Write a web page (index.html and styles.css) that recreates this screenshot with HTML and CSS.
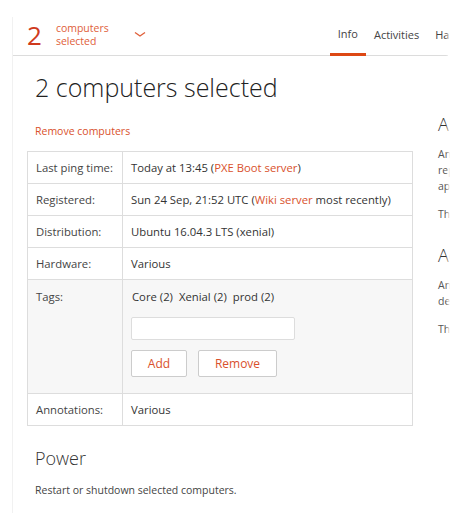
FILE: index.html
```html
<!DOCTYPE html>
<html lang="en">
<head>
    <meta charset="UTF-8">
    <meta name="viewport" content="width=device-width, initial-scale=1.0">
    <title>Selected computers</title>
    <link rel="stylesheet" href="styles.css">
</head>
<body>
    <div class="frame">
        <!-- selection header with tabs -->
        <div class="header">
            <div class="selection">
                <span class="count">2</span>
                <span class="count-label">computers<br>selected</span>
                <svg class="chevron" width="12" height="7" viewBox="0 0 12 7">
                    <path d="M1 1.5 L6 5 L11 1.5" fill="none" stroke="#e0603a" stroke-width="1.4"/>
                </svg>
            </div>
            <div class="tabs">
                <span class="tab active">Info</span>
                <span class="tab">Activities</span>
                <span class="tab">Hardware</span>
            </div>
        </div>

        <div class="content">
            <div class="main">
                <h1 class="title">2 computers selected</h1>
                <a class="link remove-link" href="#">Remove computers</a>

                <table class="info-table">
                    <tr>
                        <td class="label">Last ping time:</td>
                        <td>Today at 13:45 (<a class="link" href="#">PXE Boot server</a>)</td>
                    </tr>
                    <tr>
                        <td class="label">Registered:</td>
                        <td>Sun 24 Sep, 21:52 UTC (<a class="link" href="#">Wiki server</a> most recently)</td>
                    </tr>
                    <tr>
                        <td class="label">Distribution:</td>
                        <td>Ubuntu 16.04.3 LTS (xenial)</td>
                    </tr>
                    <tr>
                        <td class="label">Hardware:</td>
                        <td>Various</td>
                    </tr>
                    <tr class="tags-row">
                        <td class="label">Tags:</td>
                        <td>
                            <div class="tag-list">
                                <span>Core (2)</span>
                                <span>Xenial (2)</span>
                                <span>prod (2)</span>
                            </div>
                            <input class="tag-input" type="text">
                            <div class="tag-buttons">
                                <button class="btn btn-add">Add</button>
                                <button class="btn btn-remove">Remove</button>
                            </div>
                        </td>
                    </tr>
                    <tr>
                        <td class="label">Annotations:</td>
                        <td>Various</td>
                    </tr>
                </table>

                <h2 class="section-title">Power</h2>
                <p class="section-text">Restart or shutdown selected computers.</p>
            </div>

            <div class="side">
                <h3 class="side-title">Alerts</h3>
                <p class="side-text">Any alerts raised on<br>repositories or<br>applications.</p>
                <p class="side-text">There are none.</p>
                <h3 class="side-title">Activities</h3>
                <p class="side-text">Any activities<br>delivered.</p>
                <p class="side-text">There are none.</p>
            </div>
        </div>
    </div>
</body>
</html>
```

FILE: styles.css
```css
* {
    margin: 0;
    padding: 0;
    box-sizing: border-box;
}
body {
    font-family: "Open Sans", "DejaVu Sans", sans-serif;
    color: #333;
    background: #fff;
}
.frame {
    position: relative;
    margin: 17px 0 0 12px;
    width: 438px;
    height: 496px;
    overflow: hidden;
    border-left: 1px solid #f1f1f1;
}
/* soft fade where the panel is cut off */
.frame::after {
    content: "";
    position: absolute;
    top: 0;
    right: 0;
    width: 4px;
    height: 100%;
    background: linear-gradient(to right, rgba(255,255,255,0), #fff);
}

/* header */
.header {
    display: flex;
    align-items: stretch;
    height: 39px;
    border-bottom: 1px solid #dcdcdc;
    margin-right: 2px;
}
.selection {
    display: flex;
    align-items: center;
    padding-left: 14px;
    padding-bottom: 3px;
}
.count {
    font-size: 26px;
    color: #cf3a1d;
    line-height: 1;
    margin-right: 14px;
}
.count-label {
    font-size: 10.5px;
    line-height: 13px;
    color: #e0603a;
    margin-right: 25px;
}
.chevron {
    display: block;
}
.tabs {
    display: flex;
    align-items: stretch;
    margin-left: auto;
    margin-right: -46px;
    flex-shrink: 0;
}
.tab {
    display: flex;
    align-items: center;
    padding: 0 8px 4px;
    font-size: 11px;
    color: #444;
}
.tab.active {
    border-bottom: 3px solid #dd4814;
    margin-bottom: -1px;
}

/* body */
.content {
    display: flex;
}
.main {
    width: 400px;
    padding-left: 14px;
    flex-shrink: 0;
}
.title {
    font-size: 25px;
    font-weight: 300;
    color: #222;
    margin: 15px 0 0 8px;
    line-height: 32px;
}
.link {
    color: #d9512c;
    text-decoration: none;
}
.remove-link {
    display: block;
    font-size: 10.5px;
    margin: 20px 0 0 8px;
    line-height: 16px;
}
.info-table {
    width: 386px;
    border-collapse: collapse;
    margin-top: 12px;
    font-size: 11.3px;
}
.info-table td {
    border: 1px solid #ddd;
    height: 32px;
    padding: 0 8px;
    vertical-align: middle;
    white-space: nowrap;
}
.info-table td.label {
    width: 95px;
    color: #444;
}
.tags-row td {
    background: #f7f7f7;
    vertical-align: top;
    padding-top: 9px;
    padding-bottom: 16px;
}
.tag-list {
    display: flex;
    gap: 6px;
    padding-left: 1px;
    line-height: 16px;
}
.tag-input {
    display: block;
    width: 164px;
    height: 23px;
    margin-top: 12px;
    border: 1px solid #ddd;
    border-radius: 2px;
    background: #fff;
}
.tag-buttons {
    display: flex;
    gap: 11px;
    margin-top: 10px;
}
.btn {
    height: 27px;
    background: #fff;
    border: 1px solid #ccc;
    border-radius: 2px;
    color: #d9512c;
    font-family: inherit;
    font-size: 12px;
}
.btn-add {
    width: 56px;
}
.btn-remove {
    width: 79px;
}
.section-title {
    font-size: 18px;
    font-weight: 300;
    color: #333;
    margin: 20px 0 0 8px;
    line-height: 24px;
}
.section-text {
    font-size: 10.5px;
    color: #444;
    margin: 13px 0 0 8px;
}

/* side column */
.side {
    padding-left: 25px;
    width: 160px;
    flex-shrink: 0;
    color: #555;
}
.side-title {
    font-size: 18px;
    font-weight: 300;
    color: #333;
    line-height: 24px;
}
.side-title:first-child {
    margin-top: 56px;
}
.side-text {
    font-size: 10.5px;
    line-height: 16px;
    margin-top: 12px;
    white-space: nowrap;
}
.side-title + .side-text {
    margin-top: 10px;
}
.side-text + .side-title {
    margin-top: 21px;
}
```
